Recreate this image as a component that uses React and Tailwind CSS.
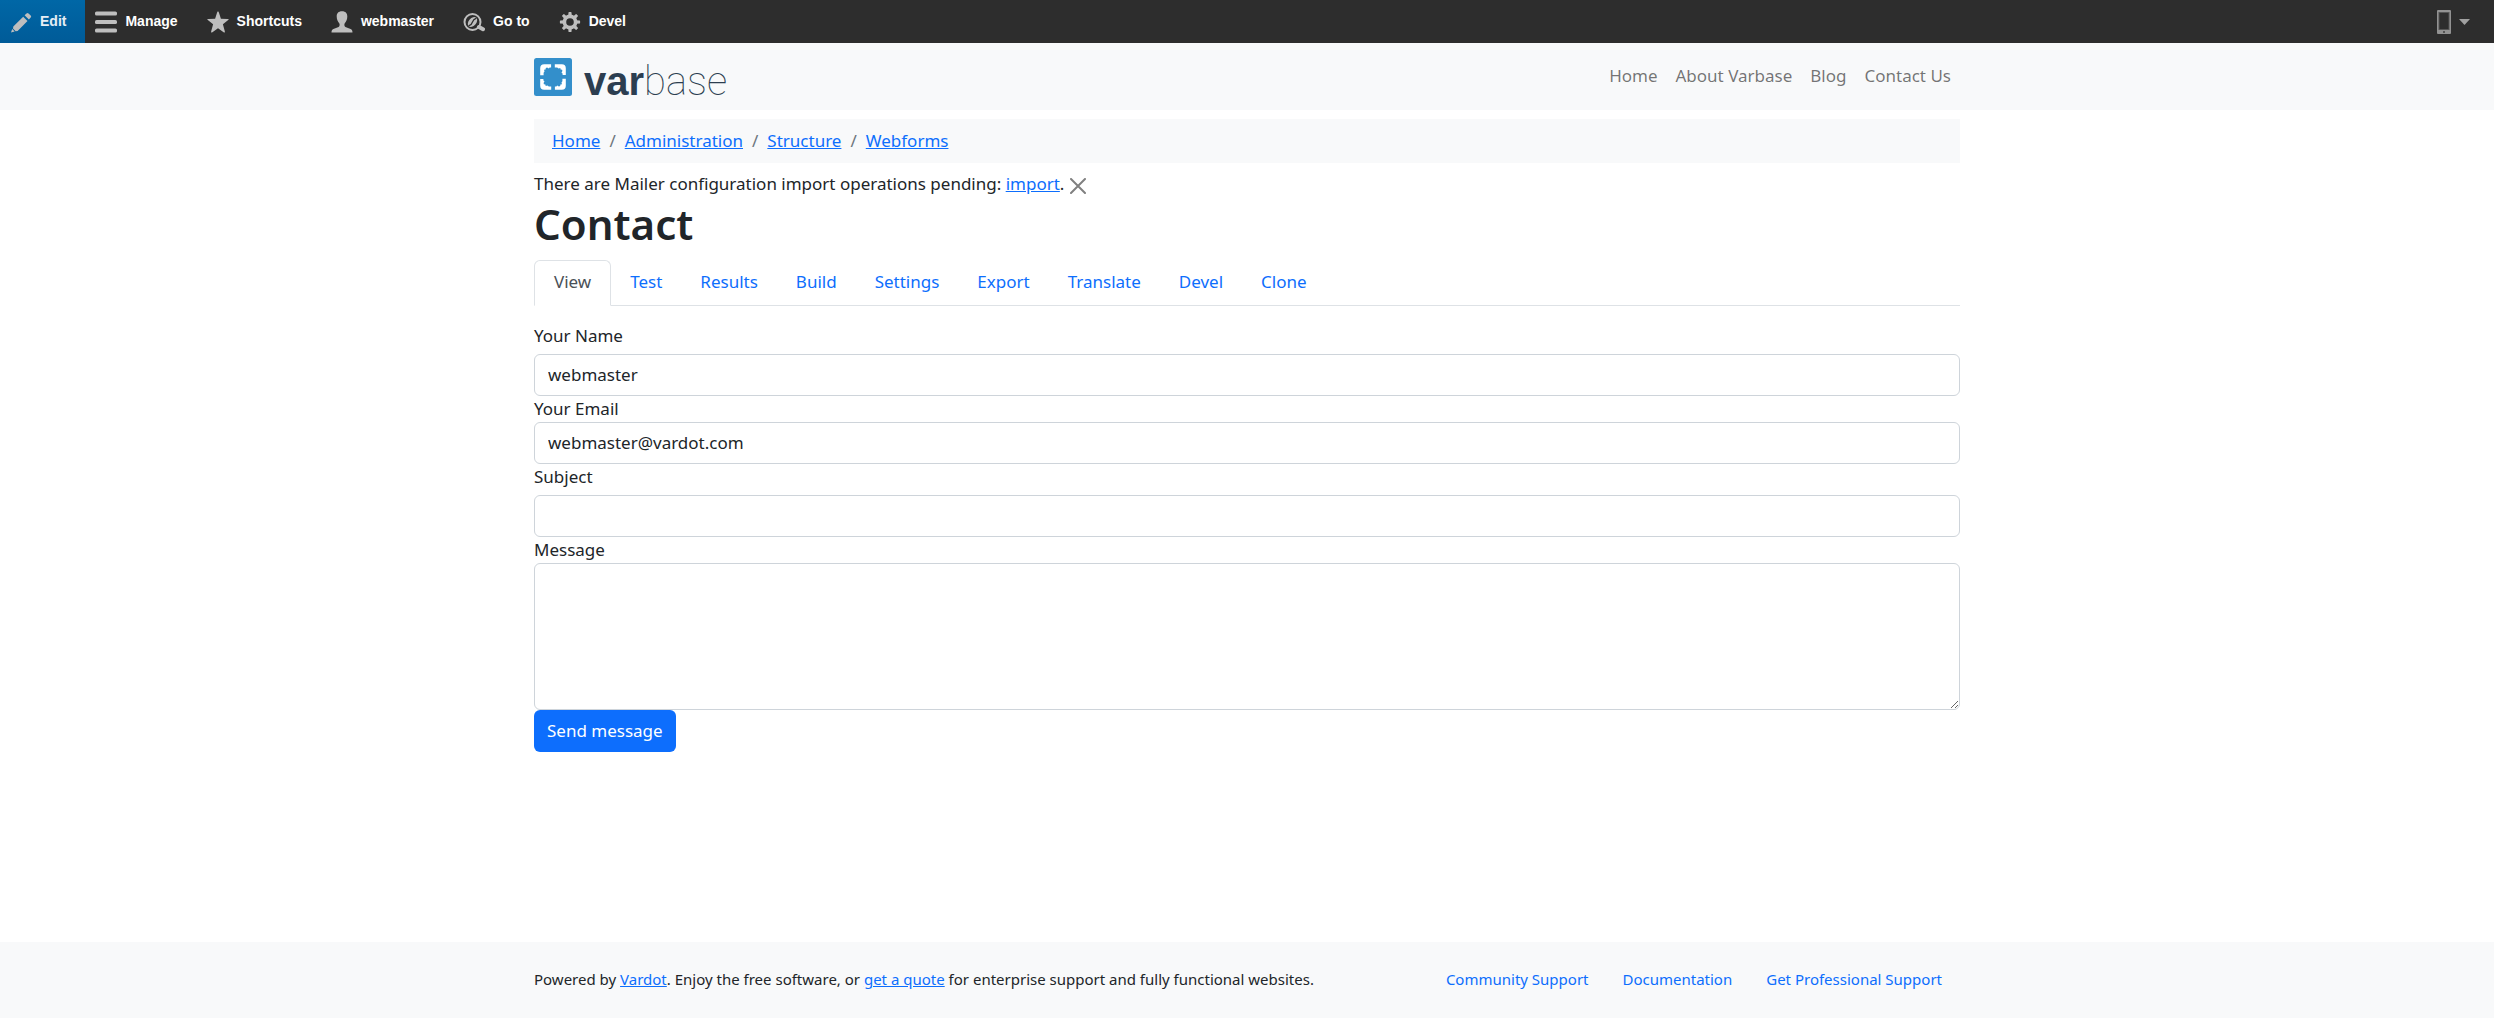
const toolbarItems = [
  { label: 'Manage', icon: <MenuIcon /> },
  { label: 'Shortcuts', icon: <StarIcon /> },
  { label: 'webmaster', icon: <PersonIcon /> },
  { label: 'Go to', icon: <CoffeeIcon /> },
  { label: 'Devel', icon: <GearIcon /> },
];

const tabs = ['Test', 'Results', 'Build', 'Settings', 'Export', 'Translate', 'Devel', 'Clone'];

function Icon({ children }) {
  return (
    <svg aria-hidden="true" viewBox="0 0 22 22" className="h-[22px] w-[22px] shrink-0" fill="#bebebe">
      {children}
    </svg>
  );
}

function PencilIcon() {
  return (
    <Icon>
      <path d="M1 21.5 2.2 18l2.5 2.4zM3.3 15.6 13.2 5.7l4.3 4.3-9.9 9.9-2 .3-2.6-2.7zM14.6 4.3l1.9-1.9q1-1 2 0l2.2 2.2q1 1 0 2l-1.8 1.9z" />
    </Icon>
  );
}

function MenuIcon() {
  return (
    <Icon>
      <rect x="0" y="0.5" width="22" height="4" rx="1.6" />
      <rect x="0" y="9" width="22" height="4" rx="1.6" />
      <rect x="0" y="17.5" width="22" height="4" rx="1.6" />
    </Icon>
  );
}

function StarIcon() {
  return (
    <Icon>
      <path d="M11 .5c.5 0 .7.5.9 1l2 6.2 6.8.2c1.1 0 1.3.6.5 1.2l-5.3 4.2 1.9 7c.3 1.2-.3 1.5-1.2.9L11 17.2l-5.6 4c-.9.6-1.5.3-1.2-.9l1.9-7L.8 9.1C0 8.5.2 7.9 1.3 7.9l6.8-.2 2-6.2c.2-.5.4-1 .9-1z" />
    </Icon>
  );
}

function PersonIcon() {
  return (
    <Icon>
      <path d="M11 .3c3.7 0 5.3 2.2 5.3 5.2 0 3.3-1.3 5.3-2.5 6.7-.7.9-.6 3 .6 3.7l5.2 2.2c1.3.6 1.9 1.6 1.9 3.4h-21c0-1.8.6-2.8 1.9-3.4l5.2-2.2c1.2-.7 1.3-2.8.6-3.7-1.2-1.4-2.5-3.4-2.5-6.7C5.7 2.5 7.3.3 11 .3z" />
    </Icon>
  );
}

function CoffeeIcon() {
  return (
    <Icon>
      <circle cx="9.5" cy="11" r="8" fill="none" stroke="#bebebe" strokeWidth="2" />
      <path d="M16 16l4 2.2" stroke="#bebebe" strokeWidth="4" strokeLinecap="round" />
      <g transform="rotate(42 9.5 11)">
        <ellipse cx="9.5" cy="11" rx="3.8" ry="5.6" />
        <path d="M9.8 5.5q-1.6 3-.3 5.5t-.3 5.5" fill="none" stroke="#2d2d2d" strokeWidth="1.2" />
      </g>
    </Icon>
  );
}

function GearIcon() {
  return (
    <Icon>
      <circle cx="11" cy="11" r="5.6" fill="none" stroke="#bebebe" strokeWidth="3.6" />
      {[0, 45, 90, 135, 180, 225, 270, 315].map((angle) => (
        <path key={angle} d="M9.2 5l.3-3.6q0-.5.6-.5h1.8q.6 0 .6.5l.3 3.6z" transform={`rotate(${angle} 11 11)`} />
      ))}
    </Icon>
  );
}

function Toolbar() {
  return (
    <nav aria-label="Toolbar" className="flex h-[43px] items-stretch bg-[#2d2d2d] font-['Liberation_Sans',Arial,sans-serif] text-sm font-bold text-white">
      <button className="flex items-center gap-2 bg-linear-to-b from-[#0067a6] to-[#005b98] pr-[19px] pl-[10px] text-[#e6eef5]">
        <PencilIcon />
        <span className="pb-0.5">Edit</span>
      </button>
      {toolbarItems.map((item) => (
        <a key={item.label} href="#" className="flex items-center gap-2 pr-[19px] pl-[10px]">
          {item.icon}
          <span className="pb-0.5">{item.label}</span>
        </a>
      ))}
      <button aria-label="Device preview" className="ml-auto flex items-center gap-2 pr-6">
        <svg aria-hidden="true" viewBox="0 0 14 24" className="h-6 w-[14px]">
          <rect width="14" height="24" rx="1" fill="#929292" />
          <rect x="2" y="2.5" width="10" height="17" fill="#2d2d2d" stroke="#555" />
          <rect x="6" y="21" width="2" height="2" fill="#555" />
        </svg>
        <svg aria-hidden="true" viewBox="0 0 11 6" className="h-[6px] w-[11px]">
          <path d="M0 0h11L5.5 6z" fill="#a0a0a0" />
        </svg>
      </button>
    </nav>
  );
}

function Logo() {
  return (
    <a href="#" aria-label="varbase" className="flex items-center gap-3">
      <svg aria-hidden="true" viewBox="0 0 38 38" className="h-[38px] w-[38px]">
        <rect width="38" height="38" rx="2.5" fill="#338fcb" />
        {[0, 90, 180, 270].map((angle) => (
          <path
            key={angle}
            d="M6.200 17.200V10.200q0-4 4-4h6.900v3.200h-1.500l-.8 1.100-1.700-.9-1.300.3-.2 1.500-1.600.3.500 1.800-.9 1.300v2.400z"
            fill="#fff"
            transform={`rotate(${angle} 19 19)`}
          />
        ))}
      </svg>
      <span className="pt-2 text-[40px] leading-[46px] text-[#2c3e50]">
        <span className="font-['Liberation_Sans',Arial,sans-serif] font-bold">var</span>
        <span className="font-['Roboto',sans-serif] font-thin">base</span>
      </span>
    </a>
  );
}

function Field({ id, label, spaced, children }) {
  return (
    <div className="flex flex-col">
      <label htmlFor={id} className={spaced ? 'mb-[5px]' : ''}>{label}</label>
      {children}
    </div>
  );
}

const inputStyle = 'h-[42px] w-full rounded-md border border-[#ced4da] bg-white px-[13px] pb-0.5';
const linkStyle = 'text-[#0d6efd] underline';

export default function App() {
  return (
    <div className="flex min-h-screen flex-col bg-white font-['Noto_Sans',sans-serif] text-[17px] leading-[26px] text-[#212529]">
      <Toolbar />
      <header className="bg-[#f8f9fa]">
        <div className="mx-auto flex h-[67px] max-w-[1426px] items-center justify-between">
          <Logo />
          <nav aria-label="Main" className="flex gap-[18px] pr-[9px] pb-0.5 text-black/55">
            <a href="#">Home</a>
            <a href="#">About Varbase</a>
            <a href="#">Blog</a>
            <a href="#">Contact Us</a>
          </nav>
        </div>
      </header>

      <main className="mx-auto w-full max-w-[1426px] flex-1 pt-[9px]">
        <nav aria-label="Breadcrumb" className="bg-[#f8f9fa] px-[18px] py-[9px]">
          <ol className="flex gap-[9px]">
            {['Home', 'Administration', 'Structure', 'Webforms'].map((crumb, i) => (
              <li key={crumb} className="flex gap-[9px]">
                {i > 0 && <span className="text-[#6c757d]">/</span>}
                <a href="#" className={linkStyle}>{crumb}</a>
              </li>
            ))}
          </ol>
        </nav>

        <div role="status" className="mt-2 flex items-center gap-1.5">
          <p>
            There are Mailer configuration import operations pending: <a href="#" className={linkStyle}>import</a>.
          </p>
          <button aria-label="Close">
            <svg aria-hidden="true" viewBox="0 0 16 16" className="mt-1 h-4 w-4">
              <path d="M1 1l14 14M15 1 1 15" stroke="#808080" strokeWidth="2" strokeLinecap="round" />
            </svg>
          </button>
        </div>

        <h1 className="mb-[9px] text-[42px] leading-[54px] font-semibold">Contact</h1>

        <nav aria-label="Tabs" className="flex border-b border-[#dee2e6]">
          <a href="#" aria-current="page" className="-mb-px rounded-t-md border border-b-white border-[#dee2e6] px-[19px] pt-2 pb-[10px] text-[#495057]">
            View
          </a>
          {tabs.map((tab) => (
            <a key={tab} href="#" className="-mb-px border border-transparent px-[18px] pt-2 pb-[10px] text-[#0d6efd]">{tab}</a>
          ))}
        </nav>

        <form className="flex flex-col pt-[17px]" onSubmit={(e) => e.preventDefault()}>
          <Field id="name" label="Your Name" spaced>
            <input id="name" type="text" defaultValue="webmaster" className={inputStyle} />
          </Field>
          <Field id="email" label="Your Email">
            <input id="email" type="email" defaultValue="webmaster@vardot.com" className={inputStyle} />
          </Field>
          <Field id="subject" label="Subject" spaced>
            <input id="subject" type="text" className={inputStyle} />
          </Field>
          <Field id="message" label="Message">
            <textarea id="message" className="h-[147px] w-full resize-y rounded-md border border-[#ced4da] px-[13px] py-[7px]" />
          </Field>
          <button type="submit" className="h-[42px] self-start rounded-md bg-[#0d6efd] px-[13px] text-white">
            Send message
          </button>
        </form>
      </main>

      <footer className="bg-[#f8f9fa]">
        <div className="mx-auto flex h-[76px] max-w-[1426px] items-center justify-between pb-0.5 text-[15px] leading-6">
          <p>
            Powered by <a href="#" className={linkStyle}>Vardot</a>. Enjoy the free software, or{' '}
            <a href="#" className={linkStyle}>get a quote</a> for enterprise support and fully functional websites.
          </p>
          <nav aria-label="Footer" className="flex gap-[34px] pr-[18px] text-[#0d6efd]">
            <a href="#">Community Support</a>
            <a href="#">Documentation</a>
            <a href="#">Get Professional Support</a>
          </nav>
        </div>
      </footer>
    </div>
  );
}
